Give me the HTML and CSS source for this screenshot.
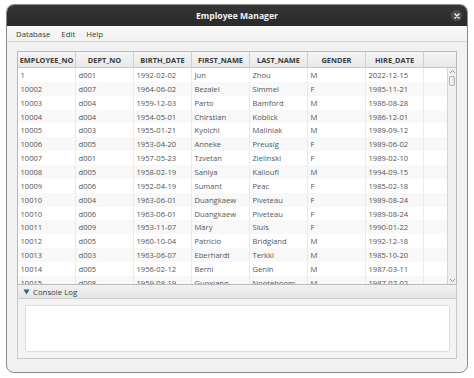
FILE: index.html
```html
<!DOCTYPE html>
<html>
<head>
<meta charset="utf-8">
<link rel="stylesheet" href="styles.css">
</head>
<body>
<div class="window">
  <div class="titlebar">
    <span class="title">Employee Manager</span>
    <span class="close"><svg width="6" height="6" viewBox="0 0 6 6"><path d="M1 1L5 5M5 1L1 5" stroke="#fff" stroke-width="1.4" stroke-linecap="round"/></svg></span>
  </div>
  <div class="menubar">
    <span class="menu">Database</span>
    <span class="menu">Edit</span>
    <span class="menu">Help</span>
  </div>
  <div class="content">
    <div class="table">
      <div class="thead">
        <div class="th">EMPLOYEE_NO</div>
        <div class="th">DEPT_NO</div>
        <div class="th">BIRTH_DATE</div>
        <div class="th">FIRST_NAME</div>
        <div class="th">LAST_NAME</div>
        <div class="th">GENDER</div>
        <div class="th">HIRE_DATE</div>
        <div class="th filler"></div>
      </div>
      <div class="tbody">
        <div class="rows">
          <div class="tr"><div class="td">1</div><div class="td">d001</div><div class="td">1992-02-02</div><div class="td">Jun</div><div class="td">Zhou</div><div class="td">M</div><div class="td">2022-12-15</div><div class="td filler"></div></div>
          <div class="tr"><div class="td">10002</div><div class="td">d007</div><div class="td">1964-06-02</div><div class="td">Bezalel</div><div class="td">Simmel</div><div class="td">F</div><div class="td">1985-11-21</div><div class="td filler"></div></div>
          <div class="tr"><div class="td">10003</div><div class="td">d004</div><div class="td">1959-12-03</div><div class="td">Parto</div><div class="td">Bamford</div><div class="td">M</div><div class="td">1986-08-28</div><div class="td filler"></div></div>
          <div class="tr"><div class="td">10004</div><div class="td">d004</div><div class="td">1954-05-01</div><div class="td">Chirstian</div><div class="td">Koblick</div><div class="td">M</div><div class="td">1986-12-01</div><div class="td filler"></div></div>
          <div class="tr"><div class="td">10005</div><div class="td">d003</div><div class="td">1955-01-21</div><div class="td">Kyoichi</div><div class="td">Maliniak</div><div class="td">M</div><div class="td">1989-09-12</div><div class="td filler"></div></div>
          <div class="tr"><div class="td">10006</div><div class="td">d005</div><div class="td">1953-04-20</div><div class="td">Anneke</div><div class="td">Preusig</div><div class="td">F</div><div class="td">1989-06-02</div><div class="td filler"></div></div>
          <div class="tr"><div class="td">10007</div><div class="td">d001</div><div class="td">1957-05-23</div><div class="td">Tzvetan</div><div class="td">Zielinski</div><div class="td">F</div><div class="td">1989-02-10</div><div class="td filler"></div></div>
          <div class="tr"><div class="td">10008</div><div class="td">d005</div><div class="td">1958-02-19</div><div class="td">Saniya</div><div class="td">Kalloufi</div><div class="td">M</div><div class="td">1994-09-15</div><div class="td filler"></div></div>
          <div class="tr"><div class="td">10009</div><div class="td">d006</div><div class="td">1952-04-19</div><div class="td">Sumant</div><div class="td">Peac</div><div class="td">F</div><div class="td">1985-02-18</div><div class="td filler"></div></div>
          <div class="tr"><div class="td">10010</div><div class="td">d004</div><div class="td">1963-06-01</div><div class="td">Duangkaew</div><div class="td">Piveteau</div><div class="td">F</div><div class="td">1989-08-24</div><div class="td filler"></div></div>
          <div class="tr"><div class="td">10010</div><div class="td">d006</div><div class="td">1963-06-01</div><div class="td">Duangkaew</div><div class="td">Piveteau</div><div class="td">F</div><div class="td">1989-08-24</div><div class="td filler"></div></div>
          <div class="tr"><div class="td">10011</div><div class="td">d009</div><div class="td">1953-11-07</div><div class="td">Mary</div><div class="td">Sluis</div><div class="td">F</div><div class="td">1990-01-22</div><div class="td filler"></div></div>
          <div class="tr"><div class="td">10012</div><div class="td">d005</div><div class="td">1960-10-04</div><div class="td">Patricio</div><div class="td">Bridgland</div><div class="td">M</div><div class="td">1992-12-18</div><div class="td filler"></div></div>
          <div class="tr"><div class="td">10013</div><div class="td">d003</div><div class="td">1963-06-07</div><div class="td">Eberhardt</div><div class="td">Terkki</div><div class="td">M</div><div class="td">1985-10-20</div><div class="td filler"></div></div>
          <div class="tr"><div class="td">10014</div><div class="td">d005</div><div class="td">1956-02-12</div><div class="td">Berni</div><div class="td">Genin</div><div class="td">M</div><div class="td">1987-03-11</div><div class="td filler"></div></div>
          <div class="tr"><div class="td">10015</div><div class="td">d008</div><div class="td">1959-08-19</div><div class="td">Guoxiang</div><div class="td">Nooteboom</div><div class="td">M</div><div class="td">1987-07-02</div><div class="td filler"></div></div>
        </div>
        <div class="vscroll">
          <svg class="arrow" width="7" height="5" viewBox="0 0 7 5"><path d="M1 4L3.5 1.5L6 4" fill="none" stroke="#8a8a8a" stroke-width="0.9"/></svg>
          <div class="thumb"></div>
          <div class="track"></div>
          <svg class="arrow" width="7" height="5" viewBox="0 0 7 5"><path d="M1 1L3.5 3.5L6 1" fill="none" stroke="#8a8a8a" stroke-width="0.9"/></svg>
        </div>
      </div>
    </div>
    <div class="console">
      <div class="console-head">
        <svg width="7" height="6" viewBox="0 0 7 6"><path d="M0.5 0.5H6.5L3.5 5.5Z" fill="#2f5f9e"/></svg>
        <span>Console Log</span>
      </div>
      <div class="console-body">
        <div class="textarea"></div>
      </div>
    </div>
  </div>
</div>
</body>
</html>
```
FILE: styles.css
```css
* { box-sizing: border-box; }
html, body { margin: 0; padding: 0; background: #ffffff; }
body { font-family: "Open Sans", "Noto Sans", sans-serif; }

.window {
  margin: 4px 0 0 6px;
  width: 462px;
  height: 369px;
  border: 1px solid #8c8c8c;
  border-radius: 8px;
  overflow: hidden;
  display: flex;
  flex-direction: column;
  background: #f1f1f1;
}

.titlebar {
  height: 21px;
  flex: none;
  background: linear-gradient(#343434, #2a2a2a);
  display: flex;
  align-items: center;
  justify-content: center;
  position: relative;
}
.title {
  color: #f2f2f2;
  font-weight: 700;
  font-size: 8.6px;
}
.close {
  position: absolute;
  right: 5px;
  top: 5px;
  width: 11px;
  height: 11px;
  border-radius: 50%;
  background: #4b4b4b;
  display: flex;
  align-items: center;
  justify-content: center;
}

.menubar {
  height: 16px;
  flex: none;
  background: linear-gradient(#f8f8f8, #f1f1f1);
  border-bottom: 1px solid #d6d6d6;
  display: flex;
  align-items: center;
  padding-left: 9px;
  gap: 11px;
  font-size: 7.8px;
  color: #3a3a3a;
}

.content {
  flex: 1;
  padding: 9px 10px 0 10px;
  display: flex;
  flex-direction: column;
}

.table {
  height: 234px;
  border: 1px solid #b9b9b9;
  background: #fff;
  display: flex;
  flex-direction: column;
  overflow: hidden;
}
.thead {
  height: 16px;
  flex: none;
  display: flex;
  background: linear-gradient(#f4f4f4, #e9e9e9);
  border-bottom: 1px solid #c8c8c8;
}
.th {
  width: 58px;
  flex: none;
  border-right: 1px solid #cfcfcf;
  font-size: 7.4px;
  font-weight: 700;
  color: #3a3a3a;
  display: flex;
  align-items: center;
  justify-content: center;
}
.th.filler { flex: 1; border-right: none; }

.tbody {
  flex: 1;
  display: flex;
  overflow: hidden;
}
.rows { flex: 1; overflow: hidden; }
.tr {
  height: 13.87px;
  display: flex;
  background: #ffffff;
}
.tr:nth-child(even) { background: #f8f8f8; }
.td {
  width: 58px;
  flex: none;
  border-right: 1px solid #ebebeb;
  font-size: 7.6px;
  color: #555;
  padding-left: 2.5px;
  display: flex;
  align-items: center;
  white-space: nowrap;
}
.td.filler { flex: 1; border-right: none; }

.vscroll {
  width: 9px;
  flex: none;
  background: #efefef;
  border-left: 1px solid #d4d4d4;
  display: flex;
  flex-direction: column;
  align-items: center;
  padding: 1px 0;
}
.arrow { flex: none; }
.thumb {
  width: 6px;
  height: 10px;
  margin-top: 2px;
  border: 1px solid #b4b4b4;
  border-radius: 2px;
  background: linear-gradient(90deg, #f6f6f6, #e4e4e4);
}
.track { flex: 1; }

.console {
  flex: none;
  height: 74px;
  display: flex;
  flex-direction: column;
  border: 1px solid #c9c9c9;
  border-top: none;
}
.console-head {
  height: 14px;
  flex: none;
  background: linear-gradient(#f2f2f2, #e4e4e4);
  border-bottom: 1px solid #cfcfcf;
  display: flex;
  align-items: center;
  gap: 3px;
  padding-left: 5px;
  font-size: 7.8px;
  color: #3a3a3a;
}
.console-body {
  flex: 1;
  background: #f3f3f3;
  padding: 6px 6px 6px 7px;
}
.textarea {
  height: 100%;
  background: #fff;
  border: 1px solid #dcdcdc;
  border-radius: 2px;
}
```
